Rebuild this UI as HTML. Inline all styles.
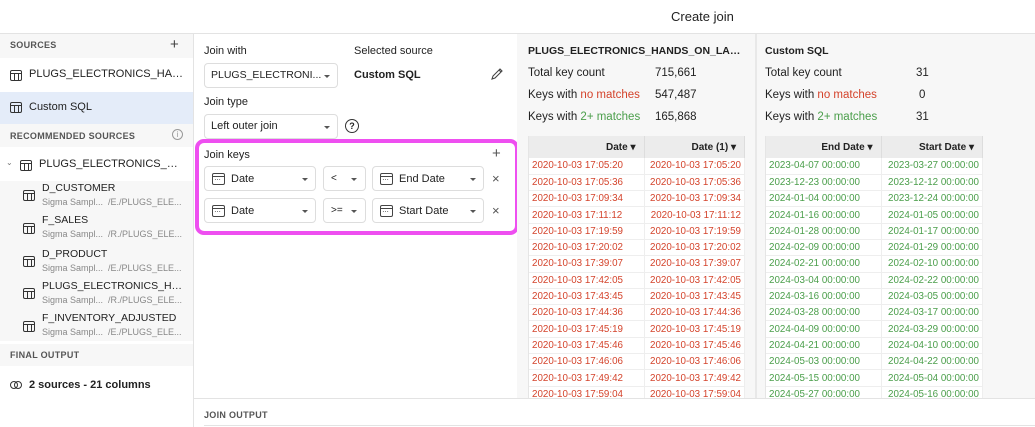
<!DOCTYPE html>
<html><head><meta charset="utf-8"><style>
*{box-sizing:border-box;margin:0;padding:0}
body{width:1035px;height:427px;overflow:hidden;font-family:"Liberation Sans",sans-serif;color:#222;background:#fff;position:relative;font-size:11px}
.a{position:absolute;white-space:nowrap}
.el{overflow:hidden;text-overflow:ellipsis}
.hdr{left:0;top:0;width:1035px;height:34px;border-bottom:1px solid #e3e3e3;background:#fff}
.side{left:0;top:34px;width:194px;height:393px;background:#f7f7f7;border-right:1px solid #e3e3e3}
.sec{font-size:9px;font-weight:bold;color:#555;letter-spacing:.3px}
.tbl{width:12px;height:11px;border:1.3px solid #333;border-radius:2px}
.tbl:before{content:"";position:absolute;left:0;right:0;top:2px;border-top:1.3px solid #333}
.tbl:after{content:"";position:absolute;left:2.5px;width:3px;top:3px;bottom:0;border-left:1px solid #333;border-right:1px solid #333}
.sel{height:25px;border:1px solid #ddd;border-radius:4px;background:#fff}
.car{width:0;height:0;border-left:3px solid transparent;border-right:3px solid transparent;border-top:3px solid #555}
.cal{width:13px;height:12px;border:1.2px solid #444;border-radius:2px}
.cal:before{content:"";position:absolute;left:0;right:0;top:2px;border-top:1.2px solid #444}
.cal:after{content:"···";position:absolute;left:1px;top:1px;font-size:8px;letter-spacing:-0.5px;color:#444}
.right{left:517px;top:34px;width:518px;height:364px;background:#f7f7f7}
.st{font-size:11.5px}
.red{color:#d4432b}.grn{color:#4a9e4a}
table{border-collapse:collapse;font-size:9.8px;background:#fff;table-layout:fixed}
td{height:16.3px;border-bottom:1px solid #eee;border-right:1px solid #eee;padding:0 3px;line-height:15px;overflow:hidden}
th{height:22px;background:#ececec;font-weight:bold;text-align:right;padding:0 8px;border-right:1px solid #ddd;font-size:10px;color:#222}
</style></head><body>
<div class="a hdr"></div>
<div class="a" style="left:671px;top:9px;font-size:13px">Create join</div>

<div class="a side"></div>
<div class="a sec" style="left:10px;top:40px">SOURCES</div>
<div class="a" style="left:170px;top:36px;font-size:15px;color:#444">+</div>
<div class="a" style="left:0;top:58px;width:193px;height:34px;background:#fff"></div>
<div class="a tbl" style="left:10px;top:70px"></div>
<div class="a el" style="left:29px;top:68px;font-size:11px;width:158px">PLUGS_ELECTRONICS_HANDS_ON_LAB</div>
<div class="a" style="left:0;top:92px;width:193px;height:32px;background:#e4ecf9"></div>
<div class="a tbl" style="left:10px;top:102px"></div>
<div class="a" style="left:29px;top:101px;font-size:11px">Custom SQL</div>
<div class="a sec" style="left:10px;top:131px">RECOMMENDED SOURCES</div>
<div class="a" style="left:172px;top:129px;width:11px;height:11px;border:1px solid #999;border-radius:50%;font-size:8px;color:#999;text-align:center;line-height:9px">i</div>
<div class="a" style="left:0;top:147px;width:193px;height:34px;background:#fff"></div>
<div class="a" style="left:6px;top:158px;font-size:8px;color:#777">⌄</div>
<div class="a tbl" style="left:20px;top:160px"></div>
<div class="a el" style="left:39px;top:158px;font-size:11px;width:146px">PLUGS_ELECTRONICS_HANDS_ON</div>

<div class="a tbl" style="left:23px;top:190px"></div>
<div class="a" style="left:42px;top:182px;font-size:10.5px">D_CUSTOMER</div>
<div class="a" style="left:42px;top:197px;font-size:9px;color:#888">Sigma Sampl...&nbsp; /E./PLUGS_ELE...</div>
<div class="a tbl" style="left:23px;top:223px"></div>
<div class="a" style="left:42px;top:214px;font-size:10.5px">F_SALES</div>
<div class="a" style="left:42px;top:229px;font-size:9px;color:#888">Sigma Sampl...&nbsp; /R./PLUGS_ELE...</div>
<div class="a tbl" style="left:23px;top:256px"></div>
<div class="a" style="left:42px;top:248px;font-size:10.5px">D_PRODUCT</div>
<div class="a" style="left:42px;top:263px;font-size:9px;color:#888">Sigma Sampl...&nbsp; /E./PLUGS_ELE...</div>
<div class="a tbl" style="left:23px;top:288px"></div>
<div class="a el" style="left:42px;top:280px;font-size:10.5px;width:142px">PLUGS_ELECTRONICS_HANDS_ON</div>
<div class="a" style="left:42px;top:295px;font-size:9px;color:#888">Sigma Sampl...&nbsp; /R./PLUGS_ELE...</div>
<div class="a tbl" style="left:23px;top:321px"></div>
<div class="a" style="left:42px;top:312px;font-size:10.5px">F_INVENTORY_ADJUSTED</div>
<div class="a" style="left:42px;top:327px;font-size:9px;color:#888">Sigma Sampl...&nbsp; /E./PLUGS_ELE...</div>
<div class="a" style="left:0;top:341px;width:193px;height:3px;background:#fff"></div>
<div class="a sec" style="left:10px;top:350px">FINAL OUTPUT</div>
<div class="a" style="left:0;top:366px;width:193px;height:61px;background:#fff"></div>
<div class="a" style="left:10px;top:381px;width:8px;height:8px;border:1.2px solid #333;border-radius:50%"></div>
<div class="a" style="left:14px;top:381px;width:8px;height:8px;border:1.2px solid #333;border-radius:50%"></div>
<div class="a" style="left:29px;top:379px;font-size:11px;font-weight:bold">2 sources - 21 columns</div>

<!-- middle -->
<div class="a" style="left:204px;top:45px;font-size:11px">Join with</div>
<div class="a" style="left:354px;top:45px;font-size:11px">Selected source</div>
<div class="a sel" style="left:204px;top:63px;width:134px"></div>
<div class="a" style="left:211px;top:69px;font-size:10.5px">PLUGS_ELECTRONI...</div>
<div class="a car" style="left:324px;top:75px"></div>
<div class="a" style="left:354px;top:69px;font-size:11px;font-weight:bold">Custom SQL</div>
<svg class="a" style="left:490px;top:67px" width="14" height="14" viewBox="0 0 14 14"><path d="M2 12l1-3 7-7 2 2-7 7z M9 3l2 2" fill="none" stroke="#444" stroke-width="1.1"/></svg>
<div class="a" style="left:204px;top:96px;font-size:11px">Join type</div>
<div class="a sel" style="left:204px;top:114px;width:134px"></div>
<div class="a" style="left:211px;top:120px;font-size:11px">Left outer join</div>
<div class="a car" style="left:324px;top:126px"></div>
<div class="a" style="left:345px;top:119px;width:14px;height:14px;border:1.3px solid #333;border-radius:50%;font-size:9px;text-align:center;line-height:12px;font-weight:bold">?</div>

<div class="a" style="left:195px;top:139px;width:324px;height:96px;border:4px solid #ee4ff0;border-radius:9px"></div>
<div class="a" style="left:204px;top:149px;font-size:11px">Join keys</div>
<div class="a" style="left:492px;top:145px;font-size:15px;color:#555">+</div>

<div class="a sel" style="left:204px;top:166px;width:112px"></div>
<div class="a cal" style="left:212px;top:173px"></div>
<div class="a" style="left:231px;top:173px;font-size:11px">Date</div>
<div class="a car" style="left:302px;top:178px"></div>
<div class="a sel" style="left:323px;top:166px;width:43px"></div>
<div class="a" style="left:331px;top:173px;font-size:10px">&lt;</div>
<div class="a car" style="left:351px;top:178px"></div>
<div class="a sel" style="left:372px;top:166px;width:112px"></div>
<div class="a cal" style="left:380px;top:173px"></div>
<div class="a" style="left:399px;top:173px;font-size:11px">End Date</div>
<div class="a car" style="left:470px;top:178px"></div>
<div class="a" style="left:492px;top:171px;font-size:13px;color:#555">×</div>

<div class="a sel" style="left:204px;top:198px;width:112px"></div>
<div class="a cal" style="left:212px;top:205px"></div>
<div class="a" style="left:231px;top:205px;font-size:11px">Date</div>
<div class="a car" style="left:302px;top:210px"></div>
<div class="a sel" style="left:323px;top:198px;width:43px"></div>
<div class="a" style="left:331px;top:205px;font-size:10px">&gt;=</div>
<div class="a car" style="left:351px;top:210px"></div>
<div class="a sel" style="left:372px;top:198px;width:112px"></div>
<div class="a cal" style="left:380px;top:205px"></div>
<div class="a" style="left:399px;top:205px;font-size:11px">Start Date</div>
<div class="a car" style="left:470px;top:210px"></div>
<div class="a" style="left:492px;top:203px;font-size:13px;color:#555">×</div>

<!-- right -->
<div class="a right"></div>
<div class="a" style="left:755px;top:34px;width:2px;height:364px;background:#e8e8e8"></div>
<div class="a el" style="left:528px;top:45px;font-size:10.5px;font-weight:bold;width:216px">PLUGS_ELECTRONICS_HANDS_ON_LAB_DATA</div>
<div class="a st" style="left:528px;top:67px">Total key count</div><div class="a st" style="left:655px;top:67px">715,661</div>
<div class="a st" style="left:528px;top:89px">Keys with <span class="red">no matches</span></div><div class="a st" style="left:655px;top:89px">547,487</div>
<div class="a st" style="left:528px;top:111px">Keys with <span class="grn">2+ matches</span></div><div class="a st" style="left:655px;top:111px">165,868</div>
<div class="a" style="left:765px;top:45px;font-size:10.5px;font-weight:bold">Custom SQL</div>
<div class="a st" style="left:765px;top:67px">Total key count</div><div class="a st" style="left:916px;top:67px">31</div>
<div class="a st" style="left:765px;top:89px">Keys with <span class="red">no matches</span></div><div class="a st" style="left:919px;top:89px">0</div>
<div class="a st" style="left:765px;top:111px">Keys with <span class="grn">2+ matches</span></div><div class="a st" style="left:916px;top:111px">31</div>

<div class="a" style="left:528px;top:136px;width:217px;height:262px;overflow:hidden;border-left:1px solid #e5e5e5">
<table style="width:216px" class="red">
<tr><th style="width:115px">Date ▾</th><th>Date (1) ▾</th></tr>
<tr><td>2020-10-03 17:05:20</td><td style="text-align:right">2020-10-03 17:05:20</td></tr>
<tr><td>2020-10-03 17:05:36</td><td style="text-align:right">2020-10-03 17:05:36</td></tr>
<tr><td>2020-10-03 17:09:34</td><td style="text-align:right">2020-10-03 17:09:34</td></tr>
<tr><td>2020-10-03 17:11:12</td><td style="text-align:right">2020-10-03 17:11:12</td></tr>
<tr><td>2020-10-03 17:19:59</td><td style="text-align:right">2020-10-03 17:19:59</td></tr>
<tr><td>2020-10-03 17:20:02</td><td style="text-align:right">2020-10-03 17:20:02</td></tr>
<tr><td>2020-10-03 17:39:07</td><td style="text-align:right">2020-10-03 17:39:07</td></tr>
<tr><td>2020-10-03 17:42:05</td><td style="text-align:right">2020-10-03 17:42:05</td></tr>
<tr><td>2020-10-03 17:43:45</td><td style="text-align:right">2020-10-03 17:43:45</td></tr>
<tr><td>2020-10-03 17:44:36</td><td style="text-align:right">2020-10-03 17:44:36</td></tr>
<tr><td>2020-10-03 17:45:19</td><td style="text-align:right">2020-10-03 17:45:19</td></tr>
<tr><td>2020-10-03 17:45:46</td><td style="text-align:right">2020-10-03 17:45:46</td></tr>
<tr><td>2020-10-03 17:46:06</td><td style="text-align:right">2020-10-03 17:46:06</td></tr>
<tr><td>2020-10-03 17:49:42</td><td style="text-align:right">2020-10-03 17:49:42</td></tr>
<tr><td>2020-10-03 17:59:04</td><td style="text-align:right">2020-10-03 17:59:04</td></tr>
</table></div>

<div class="a" style="left:765px;top:136px;width:218px;height:262px;overflow:hidden;border-left:1px solid #e5e5e5">
<table style="width:217px" class="grn">
<tr><th style="width:115px">End Date ▾</th><th>Start Date ▾</th></tr>
<tr><td>2023-04-07 00:00:00</td><td style="text-align:right">2023-03-27 00:00:00</td></tr>
<tr><td>2023-12-23 00:00:00</td><td style="text-align:right">2023-12-12 00:00:00</td></tr>
<tr><td>2024-01-04 00:00:00</td><td style="text-align:right">2023-12-24 00:00:00</td></tr>
<tr><td>2024-01-16 00:00:00</td><td style="text-align:right">2024-01-05 00:00:00</td></tr>
<tr><td>2024-01-28 00:00:00</td><td style="text-align:right">2024-01-17 00:00:00</td></tr>
<tr><td>2024-02-09 00:00:00</td><td style="text-align:right">2024-01-29 00:00:00</td></tr>
<tr><td>2024-02-21 00:00:00</td><td style="text-align:right">2024-02-10 00:00:00</td></tr>
<tr><td>2024-03-04 00:00:00</td><td style="text-align:right">2024-02-22 00:00:00</td></tr>
<tr><td>2024-03-16 00:00:00</td><td style="text-align:right">2024-03-05 00:00:00</td></tr>
<tr><td>2024-03-28 00:00:00</td><td style="text-align:right">2024-03-17 00:00:00</td></tr>
<tr><td>2024-04-09 00:00:00</td><td style="text-align:right">2024-03-29 00:00:00</td></tr>
<tr><td>2024-04-21 00:00:00</td><td style="text-align:right">2024-04-10 00:00:00</td></tr>
<tr><td>2024-05-03 00:00:00</td><td style="text-align:right">2024-04-22 00:00:00</td></tr>
<tr><td>2024-05-15 00:00:00</td><td style="text-align:right">2024-05-04 00:00:00</td></tr>
<tr><td>2024-05-27 00:00:00</td><td style="text-align:right">2024-05-16 00:00:00</td></tr>
</table></div>

<div class="a" style="left:194px;top:398px;width:841px;height:29px;background:#fff;border-top:1px solid #e3e3e3"></div>
<div class="a sec" style="left:204px;top:410px">JOIN OUTPUT</div>
<div class="a" style="left:204px;top:425px;width:831px;border-top:1px solid #e3e3e3"></div>
</body></html>
